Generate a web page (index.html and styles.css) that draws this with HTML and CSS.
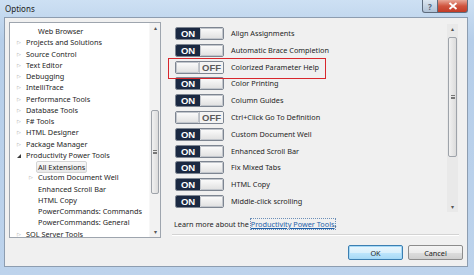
FILE: index.html
```html
<!DOCTYPE html>
<html lang="en">
<head>
    <meta charset="UTF-8">
    <title>Options</title>
    <link rel="stylesheet" href="styles.css">
</head>
<body>
    <div class="window">
        <div class="titlebar">
            <span class="title">Options</span>
        </div>
        <div class="caption">
            <div class="help">?</div>
            <div class="shut"><svg viewBox="0 0 10 8" width="10" height="8"><path d="M1.5 1 8.5 7M8.5 1 1.5 7"></path></svg></div>
        </div>

        <div class="dialog">
            <div class="main">
                <div class="tree">
                    <ul class="nodes">
                        <li class="lvl2">Web Browser</li>
                        <li class="closed">Projects and Solutions</li>
                        <li class="closed">Source Control</li>
                        <li class="closed">Text Editor</li>
                        <li class="closed">Debugging</li>
                        <li class="closed">IntelliTrace</li>
                        <li class="closed">Performance Tools</li>
                        <li class="closed">Database Tools</li>
                        <li class="closed">F# Tools</li>
                        <li class="closed">HTML Designer</li>
                        <li class="closed">Package Manager</li>
                        <li class="open">Productivity Power Tools</li>
                        <li class="lvl2"><span class="sel">All Extensions</span></li>
                        <li class="lvl2 closed">Custom Document Well</li>
                        <li class="lvl2">Enhanced Scroll Bar</li>
                        <li class="lvl2">HTML Copy</li>
                        <li class="lvl2">PowerCommands: Commands</li>
                        <li class="lvl2">PowerCommands: General</li>
                        <li class="closed">SQL Server Tools</li>
                    </ul>
                    <div class="vscroll tree-scroll">
                        <span class="arr">&#9652;</span>
                        <div class="track"><div class="thumb t1"><span class="grip"></span></div></div>
                        <span class="arr">&#9662;</span>
                    </div>
                </div>

                <div class="panel">
                    <div class="list">
                        <div class="row"><span class="tg on"><b>ON</b><i></i></span>Align Assignments</div>
                        <div class="row"><span class="tg on"><b>ON</b><i></i></span>Automatic Brace Completion</div>
                        <div class="row"><span class="tg off"><i></i><b>OFF</b></span>Colorized Parameter Help</div>
                        <div class="row"><span class="tg on"><b>ON</b><i></i></span>Color Printing</div>
                        <div class="row"><span class="tg on"><b>ON</b><i></i></span>Column Guides</div>
                        <div class="row"><span class="tg off"><i></i><b>OFF</b></span>Ctrl+Click Go To Definition</div>
                        <div class="row"><span class="tg on"><b>ON</b><i></i></span>Custom Document Well</div>
                        <div class="row"><span class="tg on"><b>ON</b><i></i></span>Enhanced Scroll Bar</div>
                        <div class="row"><span class="tg on"><b>ON</b><i></i></span>Fix Mixed Tabs</div>
                        <div class="row"><span class="tg on"><b>ON</b><i></i></span>HTML Copy</div>
                        <div class="row"><span class="tg on"><b>ON</b><i></i></span>Middle-click scrolling</div>
                        <div class="mark"></div>
                        <div class="vscroll list-scroll">
                            <span class="arr">&#9652;</span>
                            <div class="track"><div class="thumb t2"><span class="grip"></span></div></div>
                            <span class="arr">&#9662;</span>
                        </div>
                    </div>
                    <p class="learn">Learn more about the <a href="#">Productivity Power Tools</a>.</p>
                    <hr class="rule">
                </div>
            </div>

            <div class="buttons">
                <button class="btn ok">OK</button>
                <button class="btn">Cancel</button>
            </div>
        </div>
    </div>
</body>
</html>
```

FILE: styles.css
```css
*{
    margin: 0;
    padding: 0;
    box-sizing: border-box;
}

body{
    width: 474px;
    height: 275px;
    overflow: hidden;
    background-color: #bcd3ec;
    font-family: "Noto Sans", "Liberation Sans", sans-serif;
    font-size: 7.3px;
    color: #1e1e1e;
}

.window{
    width: 474px;
    height: 275px;
    position: relative;
    background: linear-gradient(#cde0f3, #b6cee9 40px, #bdd3ec);
    display: flex;
    flex-direction: column;
}

/* ---------- title bar ---------- */
.titlebar{
    height: 17px;
    flex-shrink: 0;
    padding-left: 5px;
}

.title{
    font-size: 8px;
    line-height: 18px;
    color: #1b1b1b;
}

/* caption buttons sit on the window frame */
.caption{
    position: absolute;
    top: 0;
    right: 6px;
    display: flex;
    z-index: 2;
}

.help,
.shut{
    height: 13px;
    border: 1px solid #5d6b7d;
    border-top: none;
    display: flex;
    justify-content: center;
    align-items: center;
}

.help{
    width: 16px;
    border-radius: 0 0 0 3px;
    background: linear-gradient(#dde7f1, #b0c2d6);
    color: #55657a;
    font-size: 8px;
    font-weight: bold;
}

.shut{
    width: 30px;
    border-left: none;
    border-radius: 0 0 3px 0;
    background: linear-gradient(#e8a898, #d0553f 50%, #c23b27);
}

.shut svg{
    stroke: #fff;
    stroke-width: 1.8;
}

/* ---------- dialog ---------- */
.dialog{
    height: 250px;
    margin: 0 6px 0 4px;
    background-color: #f0f0f0;
    border: 1px solid #8d9db0;
    display: flex;
    flex-direction: column;
}

.main{
    display: flex;
    padding: 4px 0 0 4px;
    gap: 3px;
}

/* ---------- tree ---------- */
.tree{
    width: 152px;
    height: 216px;
    background-color: #fff;
    border: 1px solid #9ea5ae;
    display: flex;
    overflow: hidden;
}

.nodes{
    list-style: none;
    flex: 1;
    padding-top: 3px;
}

.nodes li{
    height: 11.25px;
    line-height: 11.25px;
    padding-left: 16px;
    white-space: nowrap;
    position: relative;
}

.nodes li.lvl2{
    padding-left: 28px;
}

.nodes li.closed::before{
    content: "\25B7";
    position: absolute;
    left: 7px;
    top: 0;
    font-size: 5px;
    color: #9a9a9a;
}

.nodes li.lvl2.closed::before{
    left: 19px;
}

.nodes li.open::before{
    content: "";
    position: absolute;
    top: 4px;
    left: 7px;
    border-style: solid;
    border-width: 0 0 4px 4px;
    border-color: transparent transparent #3a3a3a transparent;
}

.sel{
    display: inline-block;
    line-height: 10px;
    padding: 0 1px;
    margin-left: -2px;
    border: 1px solid #d4d4d4;
    border-radius: 2px;
    background: linear-gradient(#f8f8f8, #e8e8e8);
}

/* ---------- scrollbars ---------- */
.vscroll{
    width: 11px;
    display: flex;
    flex-direction: column;
    align-items: center;
    background-color: #f2f2f2;
    border-left: 1px solid #f7f7f7;
}

.arr{
    height: 10px;
    font-size: 6px;
    line-height: 10px;
    color: #555;
}

.track{
    flex: 1;
    width: 100%;
    position: relative;
}

.thumb{
    position: absolute;
    left: 1px;
    right: 1px;
    border: 1px solid #9ea3aa;
    border-radius: 2px;
    background: linear-gradient(90deg, #f1f1f1, #dcdcdc);
    display: flex;
    justify-content: center;
    align-items: center;
}

.t1{
    top: 77px;
    height: 84px;
}

.t2{
    top: 3px;
    height: 120px;
}

.grip{
    width: 4px;
    height: 4px;
    border-top: 1px solid #777;
    border-bottom: 1px solid #777;
    position: relative;
}

.grip::after{
    content: "";
    position: absolute;
    left: 0;
    right: 0;
    top: 0.5px;
    border-top: 1px solid #777;
}

/* ---------- settings panel ---------- */
.panel{
    flex: 1;
    display: flex;
    flex-direction: column;
}

.list{
    height: 190px;
    padding: 5px 0 0 11px;
    position: relative;
}

.row{
    height: 16.8px;
    display: flex;
    align-items: flex-start;
    gap: 7px;
    line-height: 13px;
    white-space: nowrap;
}

.tg{
    width: 49px;
    height: 13px;
    border: 1px solid #7d8591;
    border-radius: 2px;
    display: flex;
    overflow: hidden;
    flex-shrink: 0;
}

.tg b{
    width: 24px;
    font-family: "Liberation Sans", sans-serif;
    font-size: 9.5px;
    line-height: 11px;
    text-align: center;
}

.tg i{
    flex: 1;
    background: linear-gradient(#fafafa, #e2e2e2);
    border: 1px solid #c2c6cc;
    border-radius: 1px;
}

.on b{
    background-color: #1b2942;
    color: #fff;
}

.off b{
    background-color: #f3f3f3;
    color: #5a5a5a;
    border-left: 1px solid #b9bdc3;
}

.mark{
    position: absolute;
    left: 4px;
    top: 36px;
    width: 158px;
    height: 21px;
    border: 1.5px solid #d8262c;
}

.list-scroll{
    position: absolute;
    right: 9px;
    top: 2px;
    height: 188px;
    background-color: #e9e9e9;
    border: none;
}

.learn{
    padding: 7px 0 0 10px;
    line-height: 10px;
}

.learn a{
    color: #1f5fa8;
    text-decoration: underline;
    outline: 1px dotted #6c8fb8;
}

.rule{
    margin: 5px 8px 0 8px;
    border: none;
    border-top: 1px solid #d3d3d3;
    border-bottom: 1px solid #fff;
}

/* ---------- buttons ---------- */
.buttons{
    display: flex;
    justify-content: flex-end;
    gap: 5px;
    padding: 7px 4px 0 0;
}

.btn{
    width: 55px;
    height: 15px;
    font-family: "Noto Sans", "Liberation Sans", sans-serif;
    font-size: 7.3px;
    color: #1e1e1e;
    border: 1px solid #8c8c8c;
    border-radius: 2px;
    background: linear-gradient(#f4f4f4, #ececec 50%, #dddddd 51%, #cfcfcf);
}

.ok{
    border-color: #3c7fb1;
    background: linear-gradient(#eaf6fd, #d9f0fc 50%, #bee6fd 51%, #a7d9f5);
    box-shadow: inset 0 0 0 1px #a5d9f7;
}
```
